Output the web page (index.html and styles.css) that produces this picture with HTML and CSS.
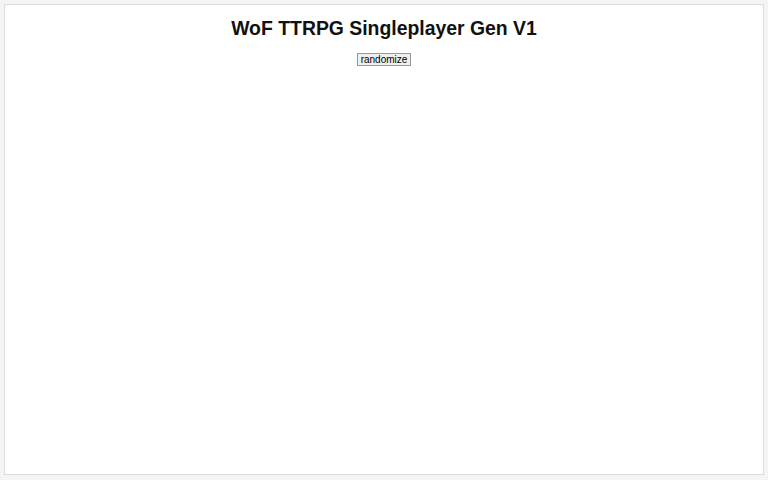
FILE: index.html
```html
<!DOCTYPE html>
<html lang="en">
<head>
    <meta charset="UTF-8">
    <meta name="viewport" content="width=device-width, initial-scale=1.0">
    <title>WoF TTRPG Singleplayer Gen V1</title>
    <link rel="stylesheet" href="styles.css">
</head>
<body>
    <div class="container">
        <h1 class="title">WoF TTRPG Singleplayer Gen V1</h1>
        <div class="controls">
            <button class="randomize-btn" onclick="randomize()">randomize</button>
        </div>
        <div id="output"></div>
    </div>

    <script>
        function randomize() {
            document.getElementById('output').innerHTML = '';
        }
    </script>
</body>
</html>
```

FILE: styles.css
```css
html, body {
    height: 100%;
}
body {
    margin: 0;
    padding: 4px 4px 5px;
    box-sizing: border-box;
    background-color: #f4f4f4;
    font-family: "Liberation Sans", Arial, sans-serif;
}
.container {
    height: 100%;
    box-sizing: border-box;
    background-color: white;
    border: 1px solid #ddd;
    text-align: center;
}
.title {
    margin: 12px 0 9px;
    font-size: 19.4px;
    font-weight: bold;
    color: #111;
}
.randomize-btn {
    font-family: "Liberation Sans", Arial, sans-serif;
    font-size: 10px;
    line-height: 11px;
    padding: 0 3px;
    background-color: #efefef;
    border: 1px solid #999;
    border-radius: 0;
    cursor: pointer;
}
```
